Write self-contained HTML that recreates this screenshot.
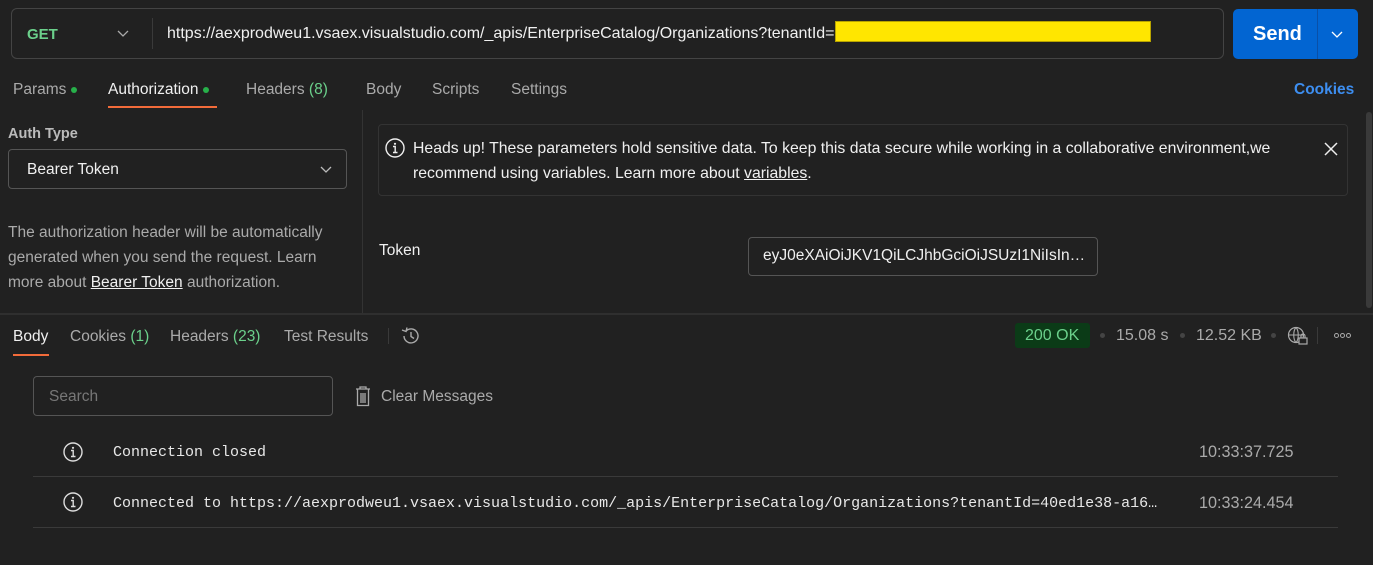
<!DOCTYPE html><html><head><style>
*{box-sizing:border-box;margin:0;padding:0}
body{width:1373px;height:565px;background:#212121;font-family:"Liberation Sans",sans-serif;color:#d4d4d4;position:relative;overflow:hidden;font-size:15.5px}
.a{position:absolute;white-space:nowrap}
.g{color:#6bd08b}
.dot{display:inline-block;width:6px;height:6px;border-radius:50%;background:#27b04a;margin-left:5px;vertical-align:middle}
.m{font-family:"Liberation Mono",monospace;color:#e8e8e8;font-size:15px}
.d3{position:absolute;width:5px;height:5px;border:1.2px solid #aaa;border-radius:50%}
</style></head><body>
<div class="a" style="left:11px;top:8px;width:1213px;height:51px;border:1px solid #444;border-radius:6px"></div>
<div class="a" style="left:27px;top:26px;color:#6bd08b;font-weight:bold;font-size:15px">GET</div>
<svg class="a" style="left:117px;top:30px" width="12" height="8"><path d="M1 1l5 5 5-5" stroke="#aaa" fill="none" stroke-width="1.3"/></svg>
<div class="a" style="left:152px;top:18px;width:1px;height:31px;background:#3a3a3a"></div>
<div class="a" style="left:167px;top:25px;color:#f0f0f0;font-size:16px">https://aexprodweu1.vsaex.visualstudio.com/_apis/EnterpriseCatalog/Organizations?tenantId=</div>
<div class="a" style="left:835px;top:21px;width:316px;height:21px;background:#ffe600;border:1px solid #b8a400"></div>
<div class="a" style="left:1233px;top:9px;width:125px;height:50px;background:#0265d2;border-radius:5px"></div>
<div class="a" style="left:1317px;top:9px;width:1px;height:50px;background:#0a50a8"></div>
<div class="a" style="left:1253px;top:23px;color:#fff;font-weight:bold;font-size:20px">Send</div>
<svg class="a" style="left:1331px;top:31px" width="12" height="8"><path d="M1 1l5 5 5-5" stroke="#fff" fill="none" stroke-width="1.3"/></svg>
<div class="a" style="left:13px;top:81px;color:#aaa">Params<span class="dot"></span></div>
<div class="a" style="left:108px;top:81px;color:#f0f0f0">Authorization<span class="dot"></span></div>
<div class="a" style="left:108px;top:106px;width:109px;height:2px;background:#f26b3a"></div>
<div class="a" style="left:246px;top:81px;color:#aaa">Headers <span class="g">(8)</span></div>
<div class="a" style="left:366px;top:81px;color:#aaa">Body</div>
<div class="a" style="left:432px;top:81px;color:#aaa">Scripts</div>
<div class="a" style="left:511px;top:81px;color:#aaa">Settings</div>
<div class="a" style="left:1294px;top:81px;color:#3d8ef0;font-weight:bold">Cookies</div>
<div class="a" style="left:362px;top:110px;width:1px;height:204px;background:#333"></div>
<div class="a" style="left:1366px;top:112px;width:6px;height:196px;background:#3a3a3a;border-radius:3px"></div>
<div class="a" style="left:8px;top:126px;color:#bbb;font-weight:bold;font-size:14.5px">Auth Type</div>
<div class="a" style="left:8px;top:149px;width:339px;height:40px;border:1px solid #555;border-radius:4px"></div>
<div class="a" style="left:27px;top:161px;color:#f0f0f0">Bearer Token</div>
<svg class="a" style="left:320px;top:166px" width="12" height="8"><path d="M1 1l5 5 5-5" stroke="#bbb" fill="none" stroke-width="1.3"/></svg>
<div class="a" style="left:8px;top:220px;color:#aaa;line-height:25px;white-space:normal;width:335px">The authorization header will be automatically generated when you send the request. Learn more about <u style="color:#f0f0f0">Bearer Token</u> authorization.</div>
<div class="a" style="left:378px;top:124px;width:970px;height:72px;border:1px solid #333;border-radius:4px"></div>
<svg class="a" style="left:384px;top:137px" width="22" height="22"><circle cx="11" cy="11" r="9" stroke="#eee" fill="none" stroke-width="1.4"/><circle cx="11" cy="6.8" r="1.1" fill="#eee"/><path d="M9 9.5h2.2v6M9 15.5h4.5" stroke="#eee" fill="none" stroke-width="1.4"/></svg>
<div class="a" style="left:413px;top:136px;color:#f0f0f0;line-height:25px;font-size:15.8px">Heads up! These parameters hold sensitive data. To keep this data secure while working in a collaborative environment,we<br>recommend using variables. Learn more about <u>variables</u>.</div>
<svg class="a" style="left:1324px;top:142px" width="14" height="14"><path d="M1 1l12 12M13 1L1 13" stroke="#eee" stroke-width="1.5"/></svg>
<div class="a" style="left:379px;top:242px;color:#f0f0f0">Token</div>
<div class="a" style="left:748px;top:237px;width:350px;height:39px;border:1px solid #555;border-radius:4px"></div>
<div class="a" style="left:763px;top:247px;color:#f0f0f0;width:325px;overflow:hidden;text-overflow:ellipsis">eyJ0eXAiOiJKV1QiLCJhbGciOiJSUzI1NiIsIngxdCI6Ik</div>
<div class="a" style="left:0;top:313px;width:1373px;height:2px;background:#2f2f2f"></div>
<div class="a" style="left:13px;top:328px;color:#f0f0f0">Body</div>
<div class="a" style="left:13px;top:354px;width:36px;height:2px;background:#f26b3a"></div>
<div class="a" style="left:70px;top:328px;color:#aaa">Cookies <span class="g">(1)</span></div>
<div class="a" style="left:170px;top:328px;color:#aaa">Headers <span class="g">(23)</span></div>
<div class="a" style="left:284px;top:328px;color:#aaa">Test Results</div>
<div class="a" style="left:388px;top:328px;width:1px;height:16px;background:#3a3a3a"></div>
<svg class="a" style="left:400px;top:325px" width="22" height="22"><path d="M4 11a7 7 0 1 0 2-5" stroke="#aaa" fill="none" stroke-width="1.4"/><path d="M2 5l4 1.5L7 2.5" stroke="#aaa" fill="none" stroke-width="1.4"/><path d="M11 7v4.5l3 2" stroke="#aaa" fill="none" stroke-width="1.4"/></svg>
<div class="a" style="left:1015px;top:323px;width:75px;height:25px;background:#0b3b17;border-radius:3px"></div>
<div class="a" style="left:1025px;top:327px;color:#6bd08b;font-size:16px">200 OK</div>
<div class="a" style="left:1100px;top:333px;width:5px;height:5px;border-radius:50%;background:#444"></div>
<div class="a" style="left:1116px;top:327px;color:#aaa;font-size:16px">15.08 s</div>
<div class="a" style="left:1180px;top:333px;width:5px;height:5px;border-radius:50%;background:#444"></div>
<div class="a" style="left:1196px;top:327px;color:#aaa;font-size:16px">12.52 KB</div>
<div class="a" style="left:1271px;top:333px;width:5px;height:5px;border-radius:50%;background:#444"></div>
<svg class="a" style="left:1287px;top:325px" width="22" height="22"><circle cx="9" cy="10" r="7.5" stroke="#aaa" fill="none" stroke-width="1.2"/><path d="M1.5 10h15M9 2.5c-3 3-3 12 0 15M9 2.5c3 3 3 12 0 15" stroke="#aaa" fill="none" stroke-width="1.1"/><rect x="12" y="13" width="8" height="6" fill="#212121" stroke="#aaa" stroke-width="1.2"/><path d="M14 13v-2a2 2 0 0 1 4 0v2" stroke="#aaa" fill="none" stroke-width="1.2"/></svg>
<div class="a" style="left:1317px;top:327px;width:1px;height:17px;background:#3a3a3a"></div>
<div class="d3" style="left:1334px;top:333px"></div><div class="d3" style="left:1340px;top:333px"></div><div class="d3" style="left:1346px;top:333px"></div>
<div class="a" style="left:33px;top:376px;width:300px;height:40px;border:1px solid #555;border-radius:4px"></div>
<div class="a" style="left:49px;top:388px;color:#777">Search</div>
<svg class="a" style="left:354px;top:385px" width="18" height="22"><path d="M2 4h14M6 4V2h6v2M3.5 4.5v16h11v-16M7 8v10M9 8v10M11 8v10" stroke="#aaa" fill="none" stroke-width="1.3"/></svg>
<div class="a" style="left:381px;top:388px;color:#aaa">Clear Messages</div>
<svg class="a" style="left:62px;top:441px" width="22" height="22"><circle cx="11" cy="11" r="9" stroke="#ddd" fill="none" stroke-width="1.4"/><circle cx="11" cy="6.8" r="1.1" fill="#ddd"/><path d="M9 9.5h2.2v6M9 15.5h4.5" stroke="#ddd" fill="none" stroke-width="1.4"/></svg>
<div class="a m" style="left:113px;top:444px">Connection closed</div>
<div class="a" style="left:1199px;top:443px;color:#aaa;font-size:16.2px">10:33:37.725</div>
<div class="a" style="left:33px;top:476px;width:1305px;height:1px;background:#3a3a3a"></div>
<svg class="a" style="left:62px;top:491px" width="22" height="22"><circle cx="11" cy="11" r="9" stroke="#ddd" fill="none" stroke-width="1.4"/><circle cx="11" cy="6.8" r="1.1" fill="#ddd"/><path d="M9 9.5h2.2v6M9 15.5h4.5" stroke="#ddd" fill="none" stroke-width="1.4"/></svg>
<div class="a m" style="left:113px;top:495px">Connected to https://aexprodweu1.vsaex.visualstudio.com/_apis/EnterpriseCatalog/Organizations?tenantId=40ed1e38-a16…</div>
<div class="a" style="left:1199px;top:494px;color:#aaa;font-size:16.2px">10:33:24.454</div>
<div class="a" style="left:33px;top:527px;width:1305px;height:1px;background:#3a3a3a"></div>
</body></html>
